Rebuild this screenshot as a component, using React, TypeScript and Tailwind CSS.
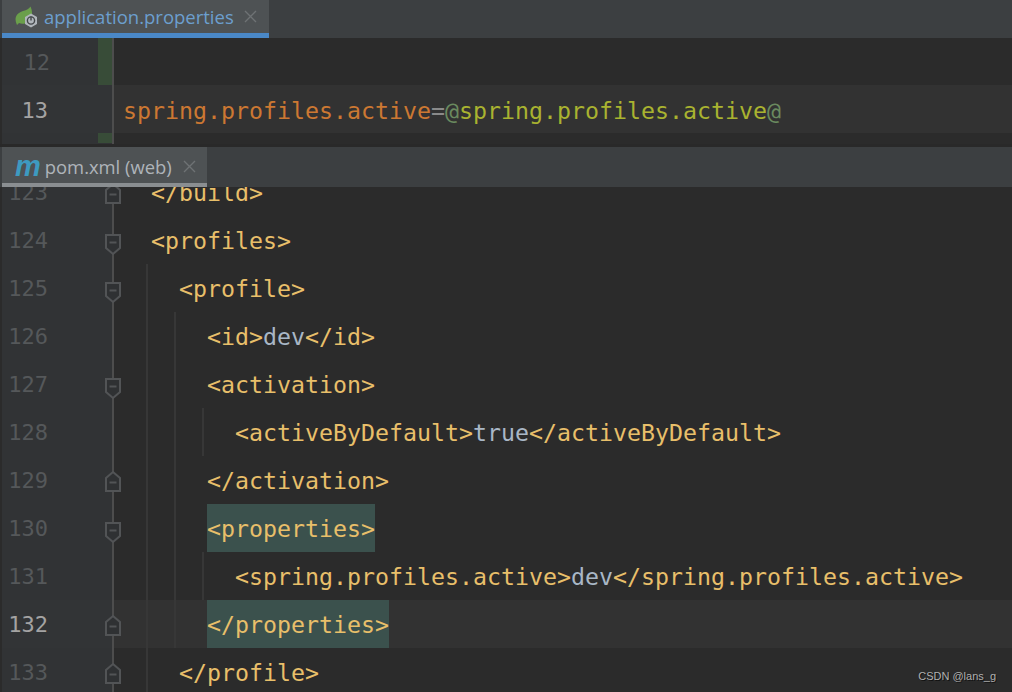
const mono = "font-['DejaVu_Sans_Mono',monospace] text-[23.25px]";
const gutterNum = "font-['DejaVu_Sans_Mono',monospace] text-[22px]";

type Fold = "open" | "close" | null;
type Token = { t: string; c: "tag" | "val" | "hl" };

type Line = { n: number; guides: number; fold: Fold; active?: boolean; tokens: Token[] };

const lines: Line[] = [
  { n: 123, guides: 0, fold: "close", tokens: [{ t: "</build>", c: "tag" }] },
  { n: 124, guides: 0, fold: "open", tokens: [{ t: "<profiles>", c: "tag" }] },
  { n: 125, guides: 1, fold: "open", tokens: [{ t: "<profile>", c: "tag" }] },
  { n: 126, guides: 2, fold: null, tokens: [{ t: "<id>", c: "tag" }, { t: "dev", c: "val" }, { t: "</id>", c: "tag" }] },
  { n: 127, guides: 2, fold: "open", tokens: [{ t: "<activation>", c: "tag" }] },
  { n: 128, guides: 3, fold: null, tokens: [{ t: "<activeByDefault>", c: "tag" }, { t: "true", c: "val" }, { t: "</activeByDefault>", c: "tag" }] },
  { n: 129, guides: 2, fold: "close", tokens: [{ t: "</activation>", c: "tag" }] },
  { n: 130, guides: 2, fold: "open", tokens: [{ t: "<properties>", c: "hl" }] },
  { n: 131, guides: 3, fold: null, tokens: [{ t: "<spring.profiles.active>", c: "tag" }, { t: "dev", c: "val" }, { t: "</spring.profiles.active>", c: "tag" }] },
  { n: 132, guides: 2, fold: "close", active: true, tokens: [{ t: "</properties>", c: "hl" }] },
  { n: 133, guides: 1, fold: "close", tokens: [{ t: "</profile>", c: "tag" }] },
];

function FoldMark({ kind }: { kind: Exclude<Fold, null> }) {
  return (
    <svg
      width="18"
      height="24"
      viewBox="0 0 18 24"
      className={kind === "open" ? "absolute -right-[10px] top-[17px]" : "absolute -right-[10px] top-[14px]"}
      fill="#2f3133"
      stroke="#525456"
      strokeWidth="2"
    >
      {kind === "open" ? <path d="M2 2H16V15L9 21L2 15Z" /> : <path d="M9 2L16 8V21H2V8Z" />}
      <path d={kind === "open" ? "M5.5 9.5H12.5" : "M5.5 12.5H12.5"} />
    </svg>
  );
}

function SpringIcon() {
  return (
    <svg width="24" height="24" viewBox="0 0 24 24" className="shrink-0">
      <path d="M0.5 14C1 9 5 7 8 6C12 5 14 4 15.5 1.5C17.5 6 17.5 10 16 13C14 18 8 20 4 18L2 20C1 18 0.5 16 0.5 14Z" fill="#6a9f4b" />
      <path d="M16 8.5L22 12V19L16 22.5L10 19V12Z" fill="#b0b6bb" />
      <circle cx="16" cy="15.5" r="3.6" fill="none" stroke="#43474a" strokeWidth="1.4" />
      <path d="M16 11.5V15.5" stroke="#43474a" strokeWidth="1.4" />
    </svg>
  );
}

function CloseX({ color }: { color: string }) {
  return (
    <svg width="13" height="13" viewBox="0 0 13 13" className="shrink-0" stroke={color} strokeWidth="1.4" fill="none">
      <path d="M1 1L12 12M12 1L1 12" />
    </svg>
  );
}

function CodeRow({ line }: { line: Line }) {
  return (
    <div className={`flex h-12 leading-[50px] ${line.active ? "bg-[#323232]" : ""}`}>
      <div className={`relative w-[114px] shrink-0 border-r-2 border-l-2 border-[#4d4d4d] border-l-[#2b2b2b] pr-[64px] text-right ${gutterNum} ${line.active ? "bg-[#323436] text-[#a4a3a3]" : "bg-[#313335] text-[#55585a]"}`}>
        {line.n}
        {line.fold && <FoldMark kind={line.fold} />}
      </div>
      <div className="flex pl-8">
        {[0, 1, 2].slice(0, line.guides).map((g) => (
          <div key={g} className="h-12 w-7 border-l-2 border-[#373737]" />
        ))}
      </div>
      <div className={`whitespace-pre pl-[5px] ${mono}`}>
        {line.tokens.map((tok, i) => (
          <span
            key={i}
            className={
              tok.c === "tag"
                ? "text-[#e8bf6a]"
                : tok.c === "val"
                  ? "text-[#a9b7c6]"
                  : "inline-block h-12 bg-[#3b514d] text-[#e8bf6a]"
            }
          >
            {tok.t}
          </span>
        ))}
      </div>
    </div>
  );
}

export default function App() {
  return (
    <div className="h-[692px] w-[1012px] overflow-hidden bg-[#2b2b2b]">
      {/* application.properties */}
      <div className="flex h-[38px] bg-[#3c3f41] pl-[2px]">
        <div className="flex h-[38px] w-[267px] items-center gap-[7px] border-b-[5px] border-[#4a88c7] bg-[#4e5254] pl-[13px] font-['Open_Sans',sans-serif] text-[18.5px] text-[#6c9fce]">
          <SpringIcon />
          <span className="-ml-[2px]">application.properties</span>
          <span className="ml-[3px]">
            <CloseX color="#6e7274" />
          </span>
        </div>
      </div>
      <div className="h-[109px] overflow-hidden border-b-[3px] border-[#292929]">
        <div className="flex h-[47px] leading-[50px]">
          <div className="flex h-full w-[114px] justify-between border-r-2 border-l-2 border-[#4d4d4d] border-l-[#2b2b2b] bg-[#313335]">
            <span className={`w-[96px] pr-[48px] text-right text-[#55585a] ${gutterNum}`}>12</span>
            <span className="h-full w-[14px] bg-[#384c38]" />
          </div>
        </div>
        <div className="flex h-12 bg-[#323232] leading-[52px]">
          <div className={`w-[114px] shrink-0 border-r-2 border-l-2 border-[#4d4d4d] border-l-[#2b2b2b] bg-[#323436] pr-[64px] text-right text-[#a4a3a3] ${gutterNum}`}>13</div>
          <div className={`whitespace-pre pl-[9px] ${mono}`}>
            <span className="text-[#cc7832]">spring.profiles.active</span>
            <span className="text-[#8a8a8a]">=</span>
            <span className="text-[#6a8a5f]">@</span>
            <span className="text-[#a9b330]">spring.profiles.active</span>
            <span className="text-[#6a8a5f]">@</span>
          </div>
        </div>
        <div className="flex h-[11px]">
          <div className="flex h-full w-[114px] justify-end border-r-2 border-l-2 border-[#4d4d4d] border-l-[#2b2b2b] bg-[#313335]">
            <span className="h-[10px] w-[14px] bg-[#384c38]" />
          </div>
        </div>
      </div>
      {/* pom.xml */}
      <div className="relative z-10 flex h-[40px] bg-[#3c3f41] pl-[2px]">
        <div className="flex h-[40px] w-[205px] items-center gap-[8px] border-b-[4px] border-[#8a8e91] bg-[#4e5254] pt-[3px] pl-[13px] font-['Open_Sans',sans-serif] text-[18.4px] text-[#aeb4ba]">
          <span className="font-['Liberation_Sans',sans-serif] text-[29px] leading-none font-bold text-[#3d9ac0] italic">m</span>
          <span className="-ml-[4px]">pom.xml (web)</span>
          <span className="ml-[3px]">
            <CloseX color="#6e7274" />
          </span>
        </div>
      </div>
      <div className="relative h-[505px] overflow-hidden">
        <div className="-mt-[19px]">
          {lines.map((l) => (
            <CodeRow key={l.n} line={l} />
          ))}
        </div>
        <span className="absolute right-[16px] bottom-[10px] font-['Liberation_Sans',sans-serif] text-[11px] leading-none text-[#b0b0b0] [text-shadow:1px_1px_0_#111]">
          CSDN @lans_g
        </span>
      </div>
    </div>
  );
}
